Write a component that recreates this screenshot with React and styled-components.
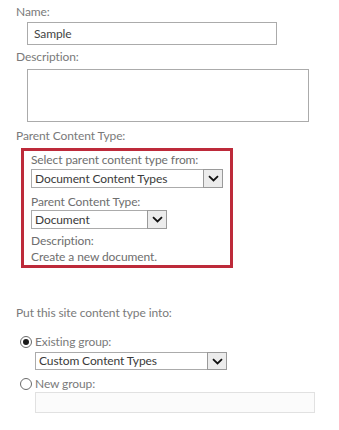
import React from "react";
import styled, { createGlobalStyle } from "styled-components";

const GlobalStyle = createGlobalStyle`
  html, body {
    margin: 0;
    padding: 0;
    background: #ffffff;
  }
  body {
    font-family: Lato, "Liberation Sans", sans-serif;
    font-size: 12px;
    letter-spacing: -0.1px;
    line-height: 16px;
    color: #7a7a7a;
  }
`;

const Page = styled.div`
  width: 339px;
  height: 430px;
  padding: 4px 0 0 16px;
  box-sizing: border-box;
  overflow: hidden;
`;

const Label = styled.div`
  height: 16px;
  line-height: 16px;
  color: ${props => (props.dark ? "#6e6e6e" : "#7a7a7a")};
  margin-top: ${props => props.gap || 0}px;
  white-space: nowrap;
`;

const Indent = styled.div`
  margin-left: ${props => props.by || 11}px;
  margin-top: ${props => props.gap || 0}px;
`;

const TextBox = styled.div`
  width: ${props => props.w}px;
  height: ${props => props.h}px;
  box-sizing: border-box;
  border: 1px solid ${props => (props.faint ? "#e1e1e1" : "#ababab")};
  background: ${props => (props.faint ? "#fbfbfb" : "#ffffff")};
  color: #444444;
  padding: 0 6px;
  line-height: ${props => props.h - 2}px;
  margin-top: ${props => props.gap || 0}px;
`;

const HighlightBox = styled.div`
  width: 212px;
  box-sizing: border-box;
  margin: 4px 0 0 5px;
  border: 3px solid #bd2a3a;
  padding: 1px 0 0 7px;
`;

const Select = styled.div`
  display: flex;
  width: ${props => props.w}px;
  height: ${props => props.h || 19}px;
  box-sizing: border-box;
  border: 1px solid #ababab;
  background: #ffffff;
  margin-top: ${props => props.gap || 0}px;
`;

const SelectValue = styled.div`
  flex: 1;
  padding-left: 3px;
  color: #3a3a3a;
  line-height: ${props => (props.h || 19) - 2}px;
  white-space: nowrap;
  overflow: hidden;
`;

const SelectButton = styled.div`
  width: 20px;
  margin: -1px -1px -1px 0;
  box-sizing: border-box;
  border: 1px solid #9a9a9a;
  background: #ececec;
  display: flex;
  align-items: center;
  justify-content: center;
`;

const RadioRow = styled.div`
  display: flex;
  align-items: center;
  margin-top: ${props => props.gap || 0}px;
  margin-left: 4px;
  height: 16px;
`;

const RadioCircle = styled.span`
  width: 12px;
  height: 12px;
  box-sizing: border-box;
  border-radius: 50%;
  border: 1px solid #6a6a6a;
  background: #ffffff;
  display: flex;
  align-items: center;
  justify-content: center;
  margin-right: 3px;
  &::after {
    content: "";
    width: 6px;
    height: 6px;
    border-radius: 50%;
    background: ${props => (props.checked ? "#1a1a1a" : "transparent")};
  }
`;

const RadioText = styled.span`
  color: #7a7a7a;
`;

const Chevron = () => (
  <svg width="11" height="7" viewBox="0 0 11 7">
    <polyline
      points="1,1.2 5.5,5.5 10,1.2"
      fill="none"
      stroke="#111111"
      strokeWidth="1.8"
    />
  </svg>
);

const DropDown = ({ w, h, gap, value }) => (
  <Select w={w} h={h} gap={gap}>
    <SelectValue h={h}>{value}</SelectValue>
    <SelectButton>
      <Chevron />
    </SelectButton>
  </Select>
);

export default function App() {
  return (
    <Page>
      <GlobalStyle />
      <Label>Name:</Label>
      <Indent>
        <TextBox w={250} h={23} gap={2}>Sample</TextBox>
      </Indent>
      <Label gap={4}>Description:</Label>
      <Indent>
        <TextBox w={282} h={53} gap={4} />
      </Indent>
      <Label gap={6}>Parent Content Type:</Label>
      <HighlightBox>
        <Label dark>Select parent content type from:</Label>
        <DropDown w={192} gap={1} value="Document Content Types" />
        <Label dark gap={6}>Parent Content Type:</Label>
        <DropDown w={136} value="Document" />
        <Label dark gap={4}>Description:</Label>
        <Label dark>Create a new document.</Label>
      </HighlightBox>
      <Label gap={37}>Put this site content type into:</Label>
      <RadioRow gap={13}>
        <RadioCircle checked />
        <RadioText>Existing group:</RadioText>
      </RadioRow>
      <Indent by={19}>
        <DropDown w={192} h={18} gap={2} value="Custom Content Types" />
      </Indent>
      <RadioRow gap={6}>
        <RadioCircle />
        <RadioText>New group:</RadioText>
      </RadioRow>
      <Indent by={19}>
        <TextBox w={280} h={21} faint />
      </Indent>
    </Page>
  );
}
